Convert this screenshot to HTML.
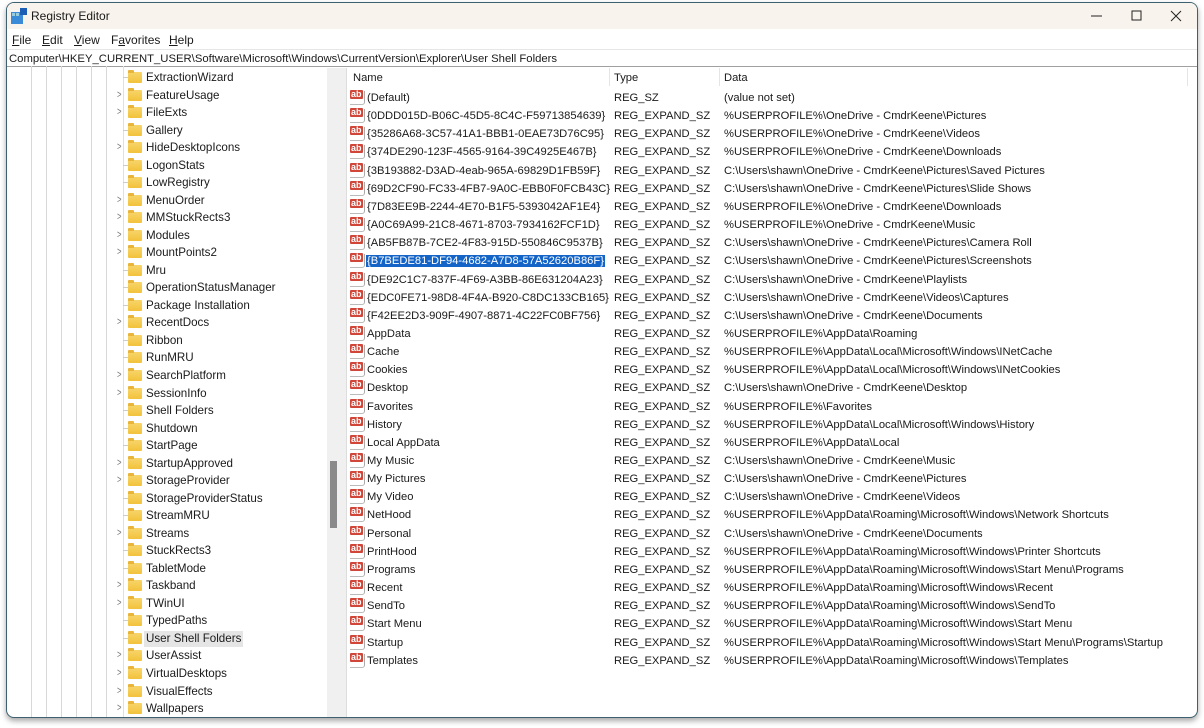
<!DOCTYPE html>
<html><head><meta charset="utf-8"><style>
*{margin:0;padding:0;box-sizing:border-box}
body{width:1204px;height:728px;background:#fff;font-family:"Liberation Sans",sans-serif;font-size:12px;color:#1a1a1a;position:relative;overflow:hidden}
.win{position:absolute;left:6px;top:2px;width:1192px;height:716px;border:1px solid #3d6170;border-radius:8px;overflow:hidden;background:#fff;box-shadow:0 3px 6px rgba(0,0,0,.35)}
.title{position:absolute;left:0;top:0;width:100%;height:26px;background:#f8f3ec}
.title .t{position:absolute;left:24px;top:6px;font-size:12px}
.menu{position:absolute;top:26px;height:20px;left:0;width:100%;background:#fff}
.menu span{position:absolute;top:4px}
.addr{position:absolute;top:46px;left:0;width:100%;height:18px;border-top:1px solid #e6e6e6;border-bottom:1px solid #a0a0a0;background:#fff}
.addr span{position:absolute;left:2px;top:3px;font-size:11.3px}
.tree{position:absolute;left:0;top:63px;width:320px;height:660px;font-size:11.6px}
.vl{position:absolute;top:0;width:1px;height:660px;background:#d8d8d8}
.ti{position:absolute;height:17px;left:0;width:320px}
.ti .tx{position:absolute;left:139px;top:2px}
.ti .fd{position:absolute;left:121px;top:3px;width:14px;height:11px;background:linear-gradient(#f7d56a,#f2c23c);border-radius:1px}
.ti .fd:before{content:"";position:absolute;left:0;top:-2px;width:6px;height:3px;background:#e8b53a;border-radius:1px 1px 0 0}
.ti .ch{position:absolute;left:109px;top:2px;color:#777;font-size:11px;transform:scaleX(.7)}
.ti .hl{position:absolute;left:116px;top:8px;width:5px;height:1px;background:#ccc}
.sel{background:#e5e5e5}
.split{position:absolute;left:320px;top:65px;width:20px;height:660px;background:#f0f0f0;border-right:1px solid #ddd}
.thumb{position:absolute;left:323px;top:458px;width:7px;height:67px;background:#8a8a8a}
.list{position:absolute;left:340px;top:63px;width:852px;height:660px;font-size:11.2px}
.hdr{position:absolute;top:0;left:0;width:100%;height:20px}
.hdr span{position:absolute;top:6px}
.hdr i{position:absolute;top:2px;width:1px;height:18px;background:#e5e5e5}
.r{position:absolute;left:0;height:18px;width:100%}
.r span{position:absolute;top:3px;white-space:nowrap}
.ab{position:absolute;left:3px;top:2px;width:15px;height:14px;border-right:1px solid #aaa;border-bottom:1px solid #bbb;border-radius:0 0 3px 0}
.ab:after{content:"ab";position:absolute;left:0;top:-1px;color:#fff;background:#d0473a;font-weight:bold;font-size:9px;line-height:9px;padding:0 1px;border-radius:1px}
.n{left:20px}.ty{left:267px}.d{left:377px}
.hs{background:#1464c8;color:#fff;padding:0 1px;left:19px!important}
</style></head><body>
<div class="win">
<div class="title">
<svg style="position:absolute;left:4px;top:5px" width="16" height="16"><rect x="0" y="4" width="12" height="12" fill="#3a8ad8"/><rect x="1" y="5" width="3" height="3" fill="#9cd"/><rect x="5" y="5" width="3" height="3" fill="#9cd"/><rect x="9" y="0" width="7" height="7" fill="#1c5db5"/></svg>
<span class="t">Registry Editor</span>
<svg style="position:absolute;left:1082px;top:6px" width="100" height="14"><line x1="2" y1="7" x2="13" y2="7" stroke="#222"/><rect x="43" y="2" width="9" height="9" fill="none" stroke="#222"/><path d="M82 2 L92 12 M92 2 L82 12" stroke="#222"/></svg>
</div>
<div class="menu"><span style="left:5px"><u>F</u>ile</span><span style="left:35px"><u>E</u>dit</span><span style="left:67px"><u>V</u>iew</span><span style="left:104px">F<u>a</u>vorites</span><span style="left:162px"><u>H</u>elp</span></div>
<div class="addr"><span>Computer\HKEY_CURRENT_USER\Software\Microsoft\Windows\CurrentVersion\Explorer\User Shell Folders</span></div>
<div class="tree">
<div class="vl" style="left:24px"></div><div class="vl" style="left:39px"></div><div class="vl" style="left:54px"></div><div class="vl" style="left:69px"></div><div class="vl" style="left:84px"></div><div class="vl" style="left:99px"></div><div class="vl" style="left:116px;background:#e0e0e0"></div>
<div id="t"></div>
</div>
<div class="split"></div><div class="thumb"></div>
<div class="list">
<div class="hdr"><span style="left:6px">Name</span><i style="left:262px"></i><span style="left:267px">Type</span><i style="left:372px"></i><span style="left:377px">Data</span><i style="left:840px"></i></div>
<div id="l"></div>
</div>
</div>
<script>
var tr=[["ExtractionWizard",0],["FeatureUsage",1],["FileExts",1],["Gallery",0],["HideDesktopIcons",1],["LogonStats",0],["LowRegistry",0],["MenuOrder",1],["MMStuckRects3",1],["Modules",1],["MountPoints2",1],["Mru",0],["OperationStatusManager",0],["Package Installation",0],["RecentDocs",1],["Ribbon",0],["RunMRU",0],["SearchPlatform",1],["SessionInfo",1],["Shell Folders",0],["Shutdown",0],["StartPage",0],["StartupApproved",1],["StorageProvider",1],["StorageProviderStatus",0],["StreamMRU",0],["Streams",1],["StuckRects3",0],["TabletMode",0],["Taskband",1],["TWinUI",1],["TypedPaths",0],["User Shell Folders",0],["UserAssist",1],["VirtualDesktops",1],["VisualEffects",1],["Wallpapers",1]];
var h="";tr.forEach(function(e,i){var y=3+i*17.53;var s=e[0]=="User Shell Folders";h+='<div class="ti" style="top:'+y+'px">'+(e[1]?'<span class="ch">&gt;</span>':'<span class="hl"></span>')+'<span class="fd"></span><span class="tx'+(s?' sel':'')+'" '+(s?'style="left:137px;padding:0 2px;top:1px;height:16px;line-height:15px"':'')+'>'+e[0]+'</span></div>'});
document.getElementById("t").innerHTML=h;
var U="%USERPROFILE%\\",C="C:\\Users\\shawn\\OneDrive - CmdrKeene\\",R=U+"AppData\\Roaming\\Microsoft\\Windows\\";
var L=[["(Default)","REG_SZ","(value not set)"],["{0DDD015D-B06C-45D5-8C4C-F59713854639}",0,U+"OneDrive - CmdrKeene\\Pictures"],["{35286A68-3C57-41A1-BBB1-0EAE73D76C95}",0,U+"OneDrive - CmdrKeene\\Videos"],["{374DE290-123F-4565-9164-39C4925E467B}",0,U+"OneDrive - CmdrKeene\\Downloads"],["{3B193882-D3AD-4eab-965A-69829D1FB59F}",0,C+"Pictures\\Saved Pictures"],["{69D2CF90-FC33-4FB7-9A0C-EBB0F0FCB43C}",0,C+"Pictures\\Slide Shows"],["{7D83EE9B-2244-4E70-B1F5-5393042AF1E4}",0,U+"OneDrive - CmdrKeene\\Downloads"],["{A0C69A99-21C8-4671-8703-7934162FCF1D}",0,U+"OneDrive - CmdrKeene\\Music"],["{AB5FB87B-7CE2-4F83-915D-550846C9537B}",0,C+"Pictures\\Camera Roll"],["{B7BEDE81-DF94-4682-A7D8-57A52620B86F}",0,C+"Pictures\\Screenshots"],["{DE92C1C7-837F-4F69-A3BB-86E631204A23}",0,C+"Playlists"],["{EDC0FE71-98D8-4F4A-B920-C8DC133CB165}",0,C+"Videos\\Captures"],["{F42EE2D3-909F-4907-8871-4C22FC0BF756}",0,C+"Documents"],["AppData",0,U+"AppData\\Roaming"],["Cache",0,U+"AppData\\Local\\Microsoft\\Windows\\INetCache"],["Cookies",0,U+"AppData\\Local\\Microsoft\\Windows\\INetCookies"],["Desktop",0,C+"Desktop"],["Favorites",0,U+"Favorites"],["History",0,U+"AppData\\Local\\Microsoft\\Windows\\History"],["Local AppData",0,U+"AppData\\Local"],["My Music",0,C+"Music"],["My Pictures",0,C+"Pictures"],["My Video",0,C+"Videos"],["NetHood",0,R+"Network Shortcuts"],["Personal",0,C+"Documents"],["PrintHood",0,R+"Printer Shortcuts"],["Programs",0,R+"Start Menu\\Programs"],["Recent",0,R+"Recent"],["SendTo",0,R+"SendTo"],["Start Menu",0,R+"Start Menu"],["Startup",0,R+"Start Menu\\Programs\\Startup"],["Templates",0,R+"Templates"]];
h="";L.forEach(function(e,i){var y=23+i*18.15;h+='<div class="r" style="top:'+y+'px"><div class="ab"></div><span class="n'+(i==9?' hs':'')+'">'+e[0]+'</span><span class="ty">'+(e[1]||"REG_EXPAND_SZ")+'</span><span class="d">'+e[2]+'</span></div>'});
document.getElementById("l").innerHTML=h;
</script>
</body></html>
